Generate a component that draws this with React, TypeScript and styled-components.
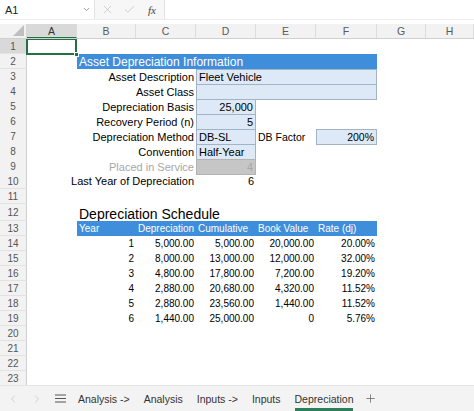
import React from 'react';
import styled, { createGlobalStyle, css } from 'styled-components';
import { X, Check, ChevronDown, ChevronLeft, ChevronRight, Plus } from 'lucide-react';

const COLS = '27px 50px 59px 60px 60px 60px 61px 49px 1fr';
const GREEN = '#217346';

const Global = createGlobalStyle`
  html, body { margin: 0; padding: 0; background: #fff; }
  body { font-family: "Liberation Sans", Arial, sans-serif; overflow: hidden; }
  #root { width: 474px; height: 411px; overflow: hidden; }
`;

const Frame = styled.div`
  width: 474px;
  height: 411px;
  display: flex;
  flex-direction: column;
  overflow: hidden;
`;

/* ---------- formula bar ---------- */
const FormulaBar = styled.div`
  height: 19px;
  display: flex;
  align-items: stretch;
  background: #f7f7f7;
  border-bottom: 1px solid #ececec;
`;

const NameBox = styled.div`
  width: 95px;
  display: flex;
  align-items: center;
  justify-content: space-between;
  padding: 0 3px 0 5px;
  box-sizing: border-box;
  background: #fff;
  border-right: 1px solid #e2e2e2;
  font-size: 11px;
  color: #222;
`;

const FxTools = styled.div`
  width: 70px;
  display: flex;
  align-items: center;
  gap: 9px;
  padding-left: 6px;
  box-sizing: border-box;
  border-right: 1px solid #e2e2e2;
`;

const FxLabel = styled.span`
  margin-left: 3px;
  font-family: "Liberation Serif", "Times New Roman", serif;
  font-style: italic;
  font-size: 11px;
  color: #444;
`;

const FormulaInput = styled.div`
  flex: 1;
  background: #fff;
`;

const Spacer = styled.div`
  height: 4px;
  background: #fff;
`;

/* ---------- grid ---------- */
const HeaderRow = styled.div`
  display: grid;
  grid-template-columns: ${COLS};
  height: 15px;
  background: #f2f2f2;
  border-bottom: 1px solid #d0d0d0;
  box-sizing: border-box;
`;

const Corner = styled.div`
  display: flex;
  align-items: flex-end;
  justify-content: flex-end;
  padding: 0 2px 2px 0;
  border-right: 1px solid #d6d6d6;
`;

const ColHeader = styled.div<{ $selected?: boolean }>`
  display: flex;
  align-items: center;
  justify-content: center;
  font-size: 10.5px;
  color: #5a5a5a;
  border-right: 1px solid #dcdcdc;
  ${(p) =>
    p.$selected &&
    css`
      background: #d9d9d9;
      color: #333;
      border-bottom: 1px solid ${GREEN};
    `}
`;

const SheetBody = styled.div`
  flex: 1;
  display: flex;
  flex-direction: column;
  overflow: hidden;
`;

const SheetRow = styled.div<{ $h?: number }>`
  display: grid;
  grid-template-columns: ${COLS};
  height: ${(p) => p.$h ?? 15}px;
  flex: none;
`;

const RowHeader = styled.div<{ $selected?: boolean }>`
  grid-column: 1;
  grid-row: 1;
  display: flex;
  align-items: center;
  justify-content: center;
  font-size: 10px;
  color: #555;
  background: ${(p) => (p.$selected ? '#d9d9d9' : '#f2f2f2')};
  border-right: 1px solid #d0d0d0;
  border-bottom: 1px solid #e2e2e2;
  box-sizing: border-box;
`;

type Kind = 'plain' | 'input' | 'banner' | 'gray' | 'head';

const Cell = styled.div<{
  $col: number;
  $span?: number;
  $kind?: Kind;
  $align?: 'left' | 'right';
  $size?: number;
  $muted?: boolean;
  $bottom?: boolean;
}>`
  grid-row: 1;
  grid-column: ${(p) => p.$col} / span ${(p) => p.$span ?? 1};
  display: flex;
  align-items: ${(p) => (p.$bottom ? 'flex-end' : 'center')};
  justify-content: ${(p) => (p.$align === 'right' ? 'flex-end' : 'flex-start')};
  padding: 0 2px;
  white-space: nowrap;
  font-size: ${(p) => p.$size ?? 11}px;
  line-height: 1;
  color: ${(p) => (p.$muted ? '#a6a6a6' : '#000')};
  box-sizing: border-box;
  min-width: 0;
  ${(p) =>
    p.$kind === 'input' &&
    css`
      background: #dde9f6;
      border: 1px solid #a3b3c6;
      height: 16px;
      align-self: start;
    `}
  ${(p) =>
    p.$kind === 'gray' &&
    css`
      background: #c6c6c6;
      border: 1px solid #b3b3b3;
      height: 16px;
      align-self: start;
    `}
  ${(p) =>
    (p.$kind === 'banner' || p.$kind === 'head') &&
    css`
      background: #3f8edb;
      color: #fff;
    `}
`;

const ActiveCell = styled.div`
  grid-column: 2;
  grid-row: 1;
  position: relative;
  border: 2px solid ${GREEN};
  margin: -1px 0 -1px -1px;
  &::after {
    content: '';
    position: absolute;
    right: -4px;
    bottom: -4px;
    width: 5px;
    height: 5px;
    background: ${GREEN};
    border: 1px solid #fff;
    box-sizing: border-box;
  }
`;

/* ---------- tab bar ---------- */
const TabBar = styled.div`
  height: 25px;
  flex: none;
  display: flex;
  align-items: center;
  background: #f3f3f3;
  border-top: 1px solid #e4e4e4;
  padding-left: 1px;
  font-size: 10.5px;
  color: #333;
`;

const NavBtn = styled.div`
  width: 24px;
  display: flex;
  justify-content: center;
  color: #c4c4c4;
`;

const MenuBtn = styled.div`
  width: 22px;
  display: flex;
  justify-content: center;
  color: #555;
`;

const Tab = styled.div<{ $active?: boolean }>`
  position: relative;
  height: 100%;
  display: flex;
  align-items: center;
  padding: 0 7px;
  color: #333;
  ${(p) =>
    p.$active &&
    css`
      &::after {
        content: '';
        position: absolute;
        left: 7px;
        right: 7px;
        bottom: 0;
        height: 3px;
        background: #2e7d5b;
      }
    `}
`;

const AddBtn = styled.div`
  padding-left: 4px;
  display: flex;
  color: #666;
`;

/* ---------- data ---------- */
type CellDef = {
  col: number;
  span?: number;
  kind?: Kind;
  align?: 'left' | 'right';
  size?: number;
  muted?: boolean;
  bottom?: boolean;
  text?: string;
};

const L = (text: string, muted = false): CellDef => ({ col: 4, align: 'right', text, muted });

const schedule: string[][] = [
  ['1', '5,000.00', '5,000.00', '20,000.00', '20.00%'],
  ['2', '8,000.00', '13,000.00', '12,000.00', '32.00%'],
  ['3', '4,800.00', '17,800.00', '7,200.00', '19.20%'],
  ['4', '2,880.00', '20,680.00', '4,320.00', '11.52%'],
  ['5', '2,880.00', '23,560.00', '1,440.00', '11.52%'],
  ['6', '1,440.00', '25,000.00', '0', '5.76%'],
];

const rows: { h?: number; cells: CellDef[] }[] = [
  { cells: [] },
  { cells: [{ col: 3, span: 5, kind: 'banner', size: 12, text: 'Asset Depreciation Information' }] },
  { cells: [L('Asset Description'), { col: 5, span: 3, kind: 'input', text: 'Fleet Vehicle' }] },
  { cells: [L('Asset Class'), { col: 5, span: 3, kind: 'input' }] },
  { cells: [L('Depreciation Basis'), { col: 5, kind: 'input', align: 'right', text: '25,000' }] },
  { cells: [L('Recovery Period (n)'), { col: 5, kind: 'input', align: 'right', text: '5' }] },
  {
    cells: [
      L('Depreciation Method'),
      { col: 5, kind: 'input', text: 'DB-SL' },
      { col: 6, size: 10.5, text: 'DB Factor' },
      { col: 7, kind: 'input', align: 'right', size: 10.5, text: '200%' },
    ],
  },
  { cells: [L('Convention'), { col: 5, kind: 'input', text: 'Half-Year' }] },
  { cells: [L('Placed in Service', true), { col: 5, kind: 'gray', align: 'right', muted: true, text: '4' }] },
  { cells: [L('Last Year of Depreciation'), { col: 5, align: 'right', text: '6' }] },
  { cells: [] },
  { h: 17, cells: [{ col: 3, size: 14, bottom: true, text: 'Depreciation Schedule' }] },
  {
    cells: ['Year', 'Depreciation', 'Cumulative', 'Book Value', 'Rate (dj)'].map((t, i) => ({
      col: 3 + i,
      kind: 'head' as Kind,
      size: 10,
      text: t,
    })),
  },
  ...schedule.map((r) => ({
    cells: r.map((t, i) => ({ col: 3 + i, align: 'right' as const, size: 10, text: t })),
  })),
  { cells: [] },
  { cells: [] },
  { cells: [] },
  { cells: [] },
];

const colLetters = ['A', 'B', 'C', 'D', 'E', 'F', 'G', 'H'];
const tabs = ['Analysis ->', 'Analysis', 'Inputs ->', 'Inputs', 'Depreciation'];

export default function App() {
  return (
    <Frame>
      <Global />
      <FormulaBar>
        <NameBox>
          <span>A1</span>
          <ChevronDown size={9} color="#777" strokeWidth={2} />
        </NameBox>
        <FxTools>
          <X size={13} color="#bdbdbd" strokeWidth={1.3} />
          <Check size={13} color="#bdbdbd" strokeWidth={1.3} />
          <FxLabel>fx</FxLabel>
        </FxTools>
        <FormulaInput />
      </FormulaBar>
      <Spacer />
      <HeaderRow>
        <Corner>
          <svg width="11" height="11" viewBox="0 0 11 11">
            <polygon points="11,0 11,11 0,11" fill="#bfbfbf" />
          </svg>
        </Corner>
        {colLetters.map((c) => (
          <ColHeader key={c} $selected={c === 'A'}>
            {c}
          </ColHeader>
        ))}
      </HeaderRow>
      <SheetBody>
        {rows.map((r, i) => (
          <SheetRow key={i} $h={r.h}>
            <RowHeader $selected={i === 0}>{i + 1}</RowHeader>
            {i === 0 && <ActiveCell />}
            {r.cells.map((c, j) => (
              <Cell
                key={j}
                $col={c.col}
                $span={c.span}
                $kind={c.kind}
                $align={c.align}
                $size={c.size}
                $muted={c.muted}
                $bottom={c.bottom}
              >
                {c.text}
              </Cell>
            ))}
          </SheetRow>
        ))}
      </SheetBody>
      <TabBar>
        <NavBtn>
          <ChevronLeft size={12} strokeWidth={1.5} />
        </NavBtn>
        <NavBtn>
          <ChevronRight size={12} strokeWidth={1.5} />
        </NavBtn>
        <MenuBtn>
          <svg width="11" height="9" viewBox="0 0 11 9">
            <path d="M0 1h11M0 4.5h11M0 8h11" stroke="#555" strokeWidth="1" />
          </svg>
        </MenuBtn>
        {tabs.map((t) => (
          <Tab key={t} $active={t === 'Depreciation'}>
            {t}
          </Tab>
        ))}
        <AddBtn>
          <Plus size={13} strokeWidth={1.4} />
        </AddBtn>
      </TabBar>
    </Frame>
  );
}
